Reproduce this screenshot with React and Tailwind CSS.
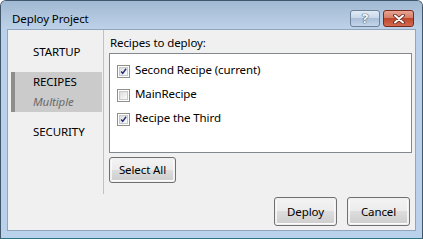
import { useState } from 'react';

const font = { fontFamily: '"Noto Sans", "Open Sans", sans-serif' };

const CheckBox = ({ checked, onChange }) => (
  <button
    onClick={onChange}
    className="w-[13px] h-[13px] border border-[#8e8f8f] bg-white p-[1px] shrink-0"
  >
    <div className="w-full h-full border border-[#c6c8cb] bg-gradient-to-br from-[#dcdcdc] to-[#fbfbfb] relative">
      {checked && (
        <svg viewBox="0 0 9 9" className="absolute inset-0 w-full h-full">
          <path d="M1.5 4.5 L3.5 7 L7.8 1" fill="none" stroke="#1f2a80" strokeWidth="1.8" />
        </svg>
      )}
    </div>
  </button>
);

const WinButton = ({ children, className = '' }) => (
  <button
    className={`rounded-[3px] border border-[#707070] p-[1px] text-[11.5px] tracking-[-0.1px] text-black ${className}`}
  >
    <div className="h-full w-full rounded-[2px] border border-white/70 flex items-center justify-center bg-[linear-gradient(to_bottom,#f2f2f2_0%,#ebebeb_50%,#dddddd_50%,#cfcfcf_100%)]">
      {children}
    </div>
  </button>
);

const App = () => {
  const [items, setItems] = useState([
    { name: 'Second Recipe (current)', checked: true },
    { name: 'MainRecipe', checked: false },
    { name: 'Recipe the Third', checked: true },
  ]);

  const toggle = (i) =>
    setItems(items.map((it, j) => (j === i ? { ...it, checked: !it.checked } : it)));

  const selectAll = () => setItems(items.map((it) => ({ ...it, checked: true })));

  return (
    <div style={font} className="w-[423px] h-[239px] flex flex-col bg-[#b9d1ea] border border-[#42566b] border-b-[#2c7480] rounded-t-[6px] overflow-hidden">
      {/* Title bar */}
      <div className="h-[28px] shrink-0 flex items-start justify-between pl-[11px] pr-[8px] bg-gradient-to-b from-[#a2b9d3] to-[#bdd2e8]">
        <span className="text-[11.5px] tracking-[-0.1px] text-black mt-[10px] leading-[16px]">Deploy Project</span>
        <div className="flex gap-[3px] mt-[9px]">
          <div className="w-[30px] h-[17px] rounded-[3px] border border-[#6d8299] bg-[linear-gradient(to_bottom,#e1ebf6_0%,#c5d6e9_50%,#a9bfd8_50%,#c3d5ea_100%)] flex items-center justify-center">
            <span className="text-white font-bold text-[13px] leading-none [text-shadow:0_0_1px_#3d4b5c,0_0_1px_#3d4b5c,0_0_1px_#3d4b5c]">?</span>
          </div>
          <div className="w-[31px] h-[17px] rounded-[3px] border border-[#7a2a1c] bg-[linear-gradient(to_bottom,#e8a493_0%,#d57a64_50%,#c0472d_50%,#d06a4f_100%)] flex items-center justify-center">
            <svg viewBox="0 0 14 10" className="w-[14px] h-[10px]">
              <path d="M3 1.5 L11 8.5 M11 1.5 L3 8.5" stroke="#5a2218" strokeWidth="3.6" strokeLinecap="round" />
              <path d="M3 1.5 L11 8.5 M11 1.5 L3 8.5" stroke="#ffffff" strokeWidth="2" strokeLinecap="round" />
            </svg>
          </div>
        </div>
      </div>

      {/* Client area */}
      <div className="flex-1 mx-[6px] mb-[7px] border border-[#8fa6be] bg-[#f0f0f0] flex text-[11.5px] tracking-[-0.1px] text-black">
        {/* Left nav */}
        <div className="w-[96px] shrink-0 h-[164px] border-r border-[#c2c2c2] pt-[2px] pl-[3px]">
          <div className="h-[40px] flex items-center pl-[22px] leading-[20px]">STARTUP</div>
          <div className="h-[40px] w-[91px] flex flex-col justify-center pl-[18px] bg-[#cbcbcb] border-l-[4px] border-[#8e8e8e] leading-[20px]">
            <span>RECIPES</span>
            <span className="italic text-[#6a6a6a]">Multiple</span>
          </div>
          <div className="h-[40px] flex items-center pl-[22px] leading-[20px]">SECURITY</div>
        </div>

        {/* Right panel */}
        <div className="flex-1 flex flex-col pl-[5px] pr-[3px]">
          <div className="h-[23px] flex items-end pb-[2px] pl-[1px] leading-[16px]">Recipes to deploy:</div>
          <div className="h-[100px] border border-[#828790] bg-white pt-[8px] pl-[7px] flex flex-col">
            {items.map((it, i) => (
              <label key={it.name} className="h-[24px] flex items-start gap-[5px] cursor-default">
                <div className="pt-[1px]">
                  <CheckBox checked={it.checked} onChange={() => toggle(i)} />
                </div>
                <span className="leading-[15px]">{it.name}</span>
              </label>
            ))}
          </div>
          <div className="mt-[4px]">
            <div onClick={selectAll}>
              <WinButton className="w-[67px] h-[26px]">Select All</WinButton>
            </div>
          </div>
          <div className="flex justify-end gap-[10px] mt-[14px] pr-[2px]">
            <WinButton className="w-[63px] h-[29px]">Deploy</WinButton>
            <WinButton className="w-[63px] h-[29px]">Cancel</WinButton>
          </div>
        </div>
      </div>
    </div>
  );
};

export default App;
